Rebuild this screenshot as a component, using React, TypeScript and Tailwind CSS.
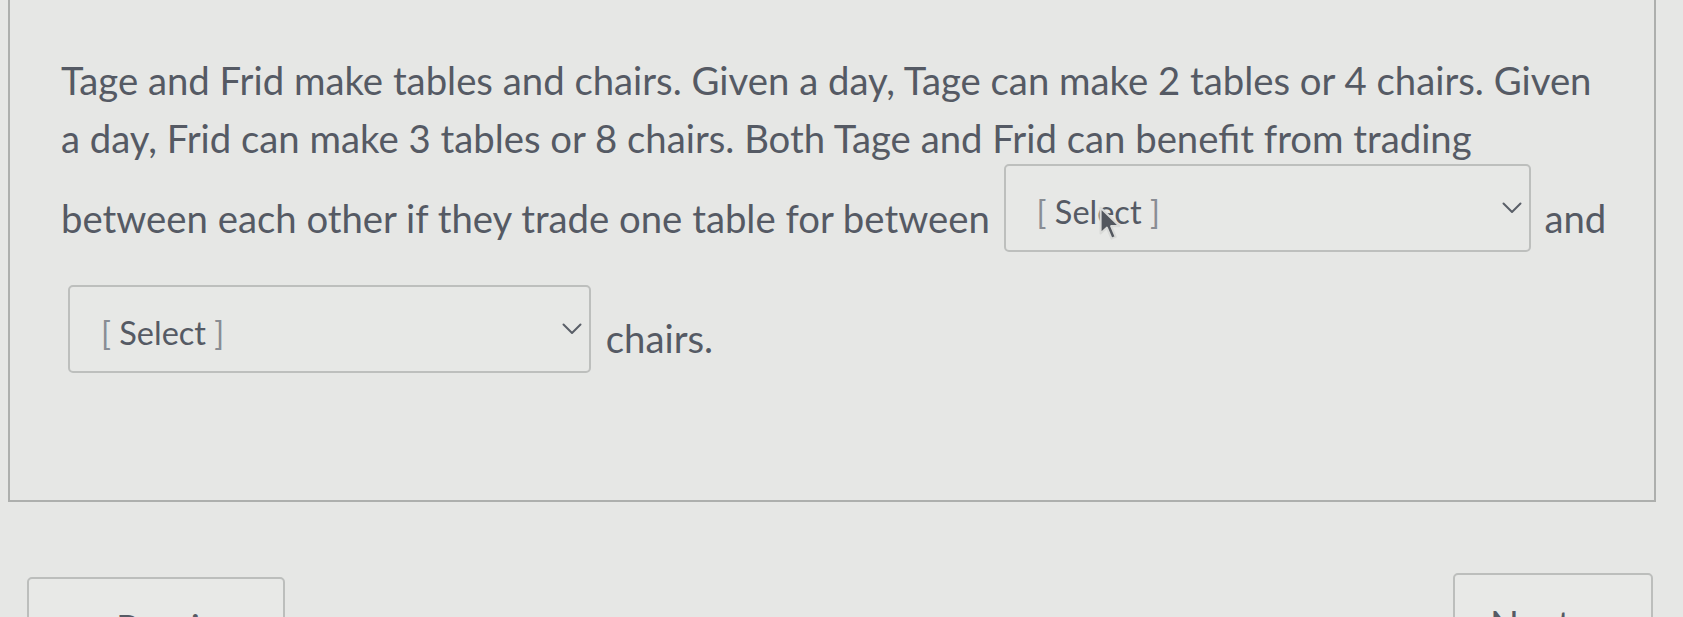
import React from "react";

function Chevron() {
  return (
    <svg width="20" height="12" viewBox="0 0 20 12" fill="none" className="shrink-0">
      <polyline points="1.5,1.5 10,10 18.5,1.5" stroke="#5a5f68" strokeWidth="2" strokeLinecap="round" strokeLinejoin="round" />
    </svg>
  );
}

function SelectBox({ width, extra }: { width: string; extra: string }) {
  return (
    <span
      className={`inline-flex h-[88px] items-center justify-between rounded-[5px] border-2 border-[#bdbfbd] bg-[#e7e8e6] pl-[31px] pr-[7px] text-[32.5px] leading-normal whitespace-nowrap ${width} ${extra}`}
    >
      <span className="mt-[8px] text-[#555a64]">
        <span className="text-[#898d94]">[</span> Select <span className="text-[#898d94]">]</span>
      </span>
      <Chevron />
    </span>
  );
}

export default function App() {
  return (
    <div className="relative h-[617px] w-[1683px] overflow-hidden bg-[#e6e7e5] font-['Lato','Noto_Sans',sans-serif] text-[#555a64]">
      <div className="pl-[8px] pr-[27px]">
        <div className="h-[502px] border-x-2 border-b-2 border-[#adafad] pl-[51px] pt-[51px]">
          <p className="text-[38.3px] leading-[58px] whitespace-nowrap">
            Tage and Frid make tables and chairs. Given a day, Tage can make 2 tables or 4 chairs. Given
            <br />
            a day, Frid can make 3 tables or 8 chairs. Both Tage and Frid can benefit from trading
            <br />
            between each other if they trade one table for between{" "}
            <SelectBox width="w-[527px]" extra="mx-[4px] mt-[-3px] mb-[16px] align-[9px]" /> and
            <br />
            <SelectBox width="w-[523px]" extra="ml-[7px] mr-[5px] mt-[17px] align-[8px]" /> chairs.
          </p>
        </div>
      </div>

      <div className="mt-[75px] flex items-start justify-between pl-[27px] pr-[30px]">
        <button className="flex h-[90px] w-[258px] items-start gap-[14px] rounded-[5px] border-2 border-[#bcbebc] bg-[#e8e9e7] pl-[58px] pt-[21px] text-[38px] leading-normal text-[#555a64]">
          <span className="mt-[14px] text-[20px]">◀</span>
          <span>Previous</span>
        </button>
        <button className="-mt-[4px] flex h-[90px] w-[200px] items-start gap-[10px] rounded-[5px] border-2 border-[#bcbebc] bg-[#e8e9e7] pl-[35px] pt-[21px] text-[38px] leading-normal text-[#555a64]">
          <span>Next</span>
          <span className="mt-[14px] text-[20px]">▶</span>
        </button>
      </div>

      <svg
        className="absolute left-[1099px] top-[206px]"
        width="23"
        height="36"
        viewBox="0 0 22 34"
      >
        <path
          d="M1.5 1.5 L1.5 26 L7.5 20.5 L12 31 L16 29.3 L11.6 19 L19.5 19 Z"
          fill="#53575e"
          stroke="#d9dad8"
          strokeWidth="2"
          strokeLinejoin="round"
        />
      </svg>
    </div>
  );
}
